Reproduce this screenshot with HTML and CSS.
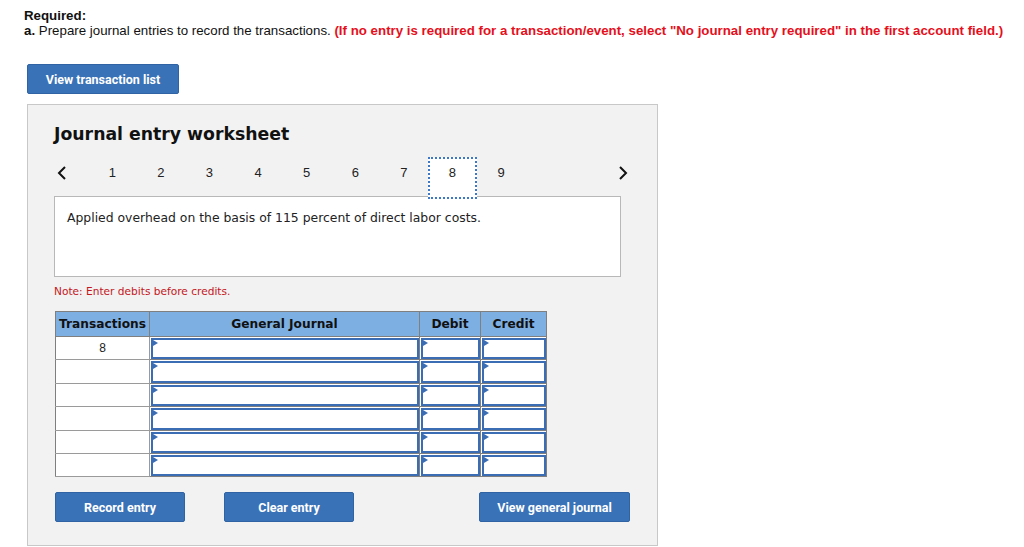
FILE: index.html
```html
<!DOCTYPE html>
<html lang="en">
<head>
<meta charset="utf-8">
<title>Journal entry worksheet</title>
<link rel="stylesheet" href="styles.css">
</head>
<body>
<div class="page">
  <div class="question">
    <div class="req">Required:</div>
    <div class="instr"><b>a.</b> Prepare journal entries to record the transactions. <span class="warn">(If no entry is required for a transaction/event, select "No journal entry required" in the first account field.)</span></div>
  </div>
  <button class="btn btn-top">View transaction list</button>
  <div class="panel">
    <h2 class="title">Journal entry worksheet</h2>
    <div class="nav">
      <span class="arrow arrow-left"><svg width="12" height="16" viewBox="0 0 12 16"><polyline points="9,2 3,8 9,14" fill="none" stroke="#111" stroke-width="2"/></svg></span>
      <div class="steps">
        <span class="step">1</span>
        <span class="step">2</span>
        <span class="step">3</span>
        <span class="step">4</span>
        <span class="step">5</span>
        <span class="step">6</span>
        <span class="step">7</span>
        <span class="step active">8</span>
        <span class="step">9</span>
      </div>
      <span class="arrow arrow-right"><svg width="12" height="16" viewBox="0 0 12 16"><polyline points="3,2 9,8 3,14" fill="none" stroke="#111" stroke-width="2"/></svg></span>
    </div>
    <div class="desc">Applied overhead on the basis of 115 percent of direct labor costs.</div>
    <div class="note">Note: Enter debits before credits.</div>
    <table class="journal">
      <thead>
        <tr>
          <th class="c-trans">Transactions</th>
          <th class="c-gj">General Journal</th>
          <th class="c-dr">Debit</th>
          <th class="c-cr">Credit</th>
        </tr>
      </thead>
      <tbody>
        <tr>
          <td class="trans">8</td>
          <td class="in"><div class="field"></div></td>
          <td class="in"><div class="field"></div></td>
          <td class="in"><div class="field"></div></td>
        </tr>
        <tr>
          <td class="trans"></td>
          <td class="in"><div class="field"></div></td>
          <td class="in"><div class="field"></div></td>
          <td class="in"><div class="field"></div></td>
        </tr>
        <tr>
          <td class="trans"></td>
          <td class="in"><div class="field"></div></td>
          <td class="in"><div class="field"></div></td>
          <td class="in"><div class="field"></div></td>
        </tr>
        <tr>
          <td class="trans"></td>
          <td class="in"><div class="field"></div></td>
          <td class="in"><div class="field"></div></td>
          <td class="in"><div class="field"></div></td>
        </tr>
        <tr>
          <td class="trans"></td>
          <td class="in"><div class="field"></div></td>
          <td class="in"><div class="field"></div></td>
          <td class="in"><div class="field"></div></td>
        </tr>
        <tr>
          <td class="trans"></td>
          <td class="in"><div class="field"></div></td>
          <td class="in"><div class="field"></div></td>
          <td class="in"><div class="field"></div></td>
        </tr>
      </tbody>
    </table>
    <div class="actions">
      <button class="btn btn-act">Record entry</button>
      <button class="btn btn-act btn-clear">Clear entry</button>
      <button class="btn btn-act btn-view">View general journal</button>
    </div>
  </div>
</div>
</body>
</html>
```
FILE: styles.css
```css
* { box-sizing: border-box; }
html, body { margin: 0; padding: 0; background: #fff; }
body { font-family: "Liberation Sans", Arial, sans-serif; color: #111; }

.page { padding: 8px 0 0 24px; }

.question { font-size: 13.3px; line-height: 15px; }
.req { font-weight: bold; }
.warn { color: #e5101c; font-weight: bold; }

.btn {
  display: block;
  background: #3a72b8;
  color: #fff;
  border: 1px solid #2f63a4;
  border-radius: 2px;
  font-family: Roboto, "Liberation Sans", sans-serif;
  font-weight: 700;
  font-size: 12.5px;
  cursor: pointer;
  padding: 0;
}
.btn-top { margin: 26px 0 0 3px; width: 152px; height: 30px; }

.panel {
  margin: 10px 0 0 3px;
  width: 631px;
  background: #f2f2f2;
  border: 1px solid #c8c8c8;
  padding: 17px 36px 23px 26px;
}

.title {
  margin: 0;
  font-family: "DejaVu Sans", Verdana, sans-serif;
  font-size: 17.3px;
  line-height: 24px;
  font-weight: bold;
  color: #111;
}

.nav {
  margin-top: 11px;
  height: 40px;
  display: flex;
  align-items: flex-start;
  position: relative;
  z-index: 1;
}
.arrow { display: flex; align-items: center; height: 31px; }
.arrow-left { margin-left: 2px; width: 32px; }
.arrow-right { margin-left: auto; margin-right: -8px; }
.steps { display: flex; height: 40px; }
.step {
  width: 48.6px;
  height: 40px;
  display: flex;
  align-items: flex-start;
  justify-content: center;
  padding-top: 8px;
  font-size: 13px;
  line-height: 15px;
  color: #222;
}
.step.active {
  background: #fff;
  border: 2px dotted #3d78c6;
  height: 42px;
  padding-top: 6px;
}

.desc {
  margin-top: -1px;
  height: 81px;
  background: #fff;
  border: 1px solid #b8b8b8;
  padding: 13px 12px;
  font-family: "DejaVu Sans", Verdana, sans-serif;
  font-size: 12.4px;
  line-height: 16px;
  color: #222;
}

.note {
  margin-top: 7px;
  font-family: "DejaVu Sans", Verdana, sans-serif;
  font-size: 10.6px;
  line-height: 14px;
  color: #c4161c;
}

.journal {
  margin: 13px 0 0 1px;
  border-collapse: collapse;
  width: 491px;
  table-layout: fixed;
  background: #fff;
}
.journal th {
  background: #7dafe3;
  border: 1px solid #7f7f7f;
  height: 25px;
  padding: 0;
  font-family: "DejaVu Sans", Verdana, sans-serif;
  font-size: 12.2px;
  font-weight: bold;
  color: #111;
}
.c-trans { width: 94px; }
.c-gj { width: 270px; }
.c-dr { width: 61px; }
.c-cr { width: 66px; }

.journal td {
  height: 23.4px;
  padding: 0;
  border: 1px solid #8a8a8a;
}
.journal td.trans {
  text-align: center;
  vertical-align: top;
  padding-top: 4px;
  font-family: "Liberation Sans", Arial, sans-serif;
  font-size: 12px;
  color: #222;
  border-color: #9a9a9a;
  border-left-color: #7f7f7f;
}
.journal td.in { padding: 1px 0 0 1px; vertical-align: top; border-color: #7f7f7f; }
.field {
  position: relative;
  height: 21.4px;
  background: #fff;
  border: 2px solid #3a6db3;
}
.field::before {
  content: "";
  position: absolute;
  left: 0;
  top: 0;
  border-left: 5px solid #3a6db3;
  border-top: 3px solid transparent;
  border-bottom: 3px solid transparent;
}

.actions {
  display: flex;
  margin: 15px -9px 0 1px;
}
.btn-act { height: 30px; width: 130px; }
.btn-clear { margin-left: 39px; }
.btn-view { margin-left: auto; width: 151px; }
```
